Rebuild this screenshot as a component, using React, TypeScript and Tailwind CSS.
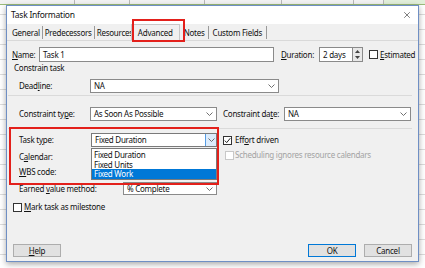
import { X } from 'lucide-react'

const font = "font-['Segoe_UI','Noto_Sans',sans-serif]"

function Chevron() {
  return (
    <svg width="7" height="4" viewBox="0 0 7 4" className="shrink-0">
      <polyline points="0.5,0.5 3.5,3.5 6.5,0.5" fill="none" stroke="#606060" strokeWidth="0.9" />
    </svg>
  )
}

function Box({ w, children }: { w: string; children?: React.ReactNode }) {
  return (
    <div className={`${w} h-full border border-[#8a8a8a] bg-white flex items-center px-[3px] shrink-0`}>
      {children}
    </div>
  )
}

function Select({ w, value }: { w: string; value?: string }) {
  return (
    <div className={`${w} h-full border border-[#8a8a8a] bg-white flex items-center justify-between pl-[3px] pr-[3px] shrink-0`}>
      <span>{value}</span>
      <Chevron />
    </div>
  )
}

function Check({ checked, disabled }: { checked?: boolean; disabled?: boolean }) {
  return (
    <div
      className={`w-[9px] h-[9px] border bg-white shrink-0 flex items-center justify-center ${
        disabled ? 'border-[#c8c8c8]' : 'border-[#333]'
      }`}
    >
      {checked && (
        <svg width="7" height="7" viewBox="0 0 7 7">
          <polyline points="0.8,3.6 2.7,5.6 6.3,1.2" fill="none" stroke="#222" strokeWidth="1" />
        </svg>
      )}
    </div>
  )
}

function Button({ label, primary }: { label: React.ReactNode; primary?: boolean }) {
  return (
    <div
      className={`w-[48px] h-[13px] bg-[#e1e1e1] flex items-center justify-center border ${
        primary ? 'border-[#0078d7]' : 'border-[#adadad]'
      }`}
    >
      {label}
    </div>
  )
}

export default function App() {
  const tabs = ['General', 'Predecessors', 'Resources']

  return (
    <div
      className={`${font} relative w-[425px] h-[268px] overflow-hidden bg-white text-[8px] tracking-[-0.25px] whitespace-nowrap text-[#111] leading-none bg-[repeating-linear-gradient(to_bottom,#ffffff_0px,#ffffff_14px,#dcdcdc_14px,#dcdcdc_15px)]`}
    >
      {/* sheet header behind */}
      <div className="h-[5px] bg-[#f2f2f2] border-b border-[#9bbb7a] flex">
        <div className="w-[75px] border-r border-[#b8b8b8]" />
        <div className="w-[55px] border-r border-[#b8b8b8]" />
        <div className="w-[75px] border-r border-[#b8b8b8]" />
        <div className="w-[77px] border-r border-[#b8b8b8]" />
        <div className="w-[72px] border-r border-[#b8b8b8]" />
        <div className="w-[30px] border-r border-[#b8b8b8]" />
        <div className="flex-1 bg-[#e2efda]" />
      </div>

      {/* dialog */}
      <div className="absolute left-[6px] top-[5px] w-[413px] h-[257px] bg-[#f0f0f0] border border-[#6f8fc4] shadow-[0_2px_6px_rgba(0,0,0,0.35)] flex flex-col">
        {/* title bar */}
        <div className="h-[18px] bg-white flex items-center justify-between pl-[4px] pr-[6px] shrink-0">
          <span className="text-[8.5px]">Task Information</span>
          <X size={10} strokeWidth={1.4} className="text-[#222]" />
        </div>

        {/* tab strip */}
        <div className="h-[17px] flex items-end pl-[3px] shrink-0 border-b border-[#d9d9d9]">
          {tabs.map((t) => (
            <div key={t} className="h-[13px] flex items-center px-[2px] border-r border-[#9a9a9a] mb-[1px]">
              {t}
            </div>
          ))}
          <div className="relative h-[16px] flex items-center px-[6px] bg-[#f0f0f0] border border-b-0 border-[#c8c8c8] -ml-[5px]">
            Advanced
          </div>
          <div className="h-[13px] flex items-center pl-[4px] pr-[3px] border-r border-[#9a9a9a] mb-[1px]">Notes</div>
          <div className="h-[13px] flex items-center px-[4px] border-r border-[#9a9a9a] mb-[1px]">Custom Fields</div>
        </div>

        {/* tab panel */}
        <div className="relative flex-1 flex flex-col">
          {/* name row */}
          <div className="flex items-center mt-[6px] h-[15px]">
            <span className="ml-[5px] w-[27px] shrink-0">
              <u>N</u>ame:
            </span>
            <Box w="w-[235px]">Task 1</Box>
            <span className="ml-[7px] w-[38px] shrink-0">
              <u>D</u>uration:
            </span>
            <Box w="w-[34px]">2 days</Box>
            <div className="w-[10px] h-full border border-l-0 border-[#8a8a8a] bg-[#e8e8e8] flex flex-col items-center justify-around">
              <svg width="5" height="3" viewBox="0 0 5 3">
                <polygon points="2.5,0 5,3 0,3" fill="#444" />
              </svg>
              <svg width="5" height="3" viewBox="0 0 5 3">
                <polygon points="0,0 5,0 2.5,3" fill="#444" />
              </svg>
            </div>
            <div className="ml-[6px]">
              <Check />
            </div>
            <span className="ml-[2px]">
              <u>E</u>stimated
            </span>
          </div>

          {/* constrain task */}
          <div className="h-[12px] flex items-center ml-[7px]">Constrain task</div>

          <div className="flex items-center mt-[5px] h-[14px]">
            <span className="ml-[12px] w-[71px] shrink-0">
              Dead<u>l</u>ine:
            </span>
            <Select w="w-[189px]" value="NA" />
          </div>

          <div className="h-px bg-[#dadada] mt-[2px] mx-[1px] mr-[6px]" />

          <div className="flex items-center mt-[11px] h-[14px]">
            <span className="ml-[12px] w-[71px] shrink-0">
              Constraint ty<u>p</u>e:
            </span>
            <Select w="w-[127px]" value="As Soon As Possible" />
            <span className="ml-[6px] w-[61px] shrink-0">
              Constraint da<u>t</u>e:
            </span>
            <Select w="w-[127px]" value="NA" />
          </div>

          <div className="h-px bg-[#dadada] mt-[7px] mx-[1px] mr-[6px]" />

          {/* task type */}
          <div className="flex items-center mt-[4px] h-[14px]">
            <span className="ml-[12px] w-[72px] shrink-0">
              Task t<u>y</u>pe:
            </span>
            <div className="w-[126px] h-full border border-[#7a7a7a] bg-white flex items-center pl-[3px] shrink-0">
              <span className="flex-1">Fixed Duration</span>
              <div className="w-[11px] h-full bg-[#dcecfc] border-l border-[#569de5] flex items-center justify-center">
                <Chevron />
              </div>
            </div>
            <div className="ml-[6px]">
              <Check checked />
            </div>
            <span className="ml-[3px]">
              Eff<u>o</u>rt driven
            </span>
          </div>

          <div className="flex items-center mt-[3px] h-[14px]">
            <span className="ml-[12px] w-[72px] shrink-0">
              C<u>a</u>lendar:
            </span>
            <Select w="w-[126px]" />
            <div className="ml-[8px] -mt-[4px]">
              <Check disabled />
            </div>
            <span className="ml-[1px] -mt-[4px] text-[#a3a3a3]">Scheduling ignores resource calendars</span>
          </div>

          <div className="flex items-center mt-[1px] h-[14px]">
            <span className="ml-[12px] w-[72px] shrink-0">
              <u>W</u>BS code:
            </span>
            <Box w="w-[126px]" />
          </div>

          <div className="flex items-center mt-[3px] h-[13px]">
            <span className="ml-[12px] w-[104px] shrink-0">
              Earned <u>v</u>alue method:
            </span>
            <Select w="w-[94px]" value="% Complete" />
          </div>

          <div className="flex items-center mt-[7px] h-[10px]">
            <div className="ml-[6px]">
              <Check />
            </div>
            <span className="ml-[2px]">
              <u>M</u>ark task as milestone
            </span>
          </div>

          <div className="flex-1" />

          <div className="flex items-center h-[13px] mb-[4px] px-[6px]">
            <Button label={<><u>H</u>elp</>} />
            <div className="flex-1" />
            <Button label="OK" primary />
            <div className="w-[8px]" />
            <Button label="Cancel" />
          </div>

          {/* open dropdown list */}
          <div className="absolute left-[84px] top-[107px] w-[126px] h-[32px] bg-white border border-[#7a7a7a] flex flex-col pt-[1px]">
            <div className="h-[10px] flex items-center pl-[2px]">Fixed Duration</div>
            <div className="h-[10px] flex items-center pl-[2px]">Fixed Units</div>
            <div className="h-[10px] flex items-center pl-[2px] bg-[#0078d7] text-white">Fixed Work</div>
          </div>

          {/* red annotation box around task type */}
          <div className="absolute left-[2px] top-[86px] w-[210px] h-[58px] border-2 border-[#e3201b]" />
        </div>

        {/* red annotation box around Advanced tab */}
        <div className="absolute left-[125px] top-[13px] w-[53px] h-[23px] border-2 border-[#e3201b]" />
      </div>
    </div>
  )
}
